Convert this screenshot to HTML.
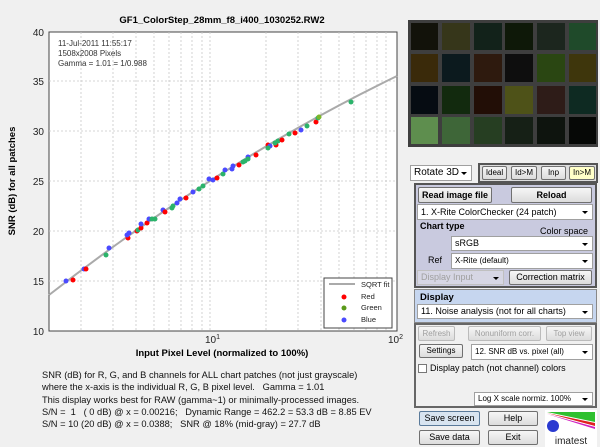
<!DOCTYPE html>
<html><head><style>
*{margin:0;padding:0;box-sizing:border-box}
body{width:600px;height:447px;background:#f0f0f0;font-family:"Liberation Sans",sans-serif;position:relative;overflow:hidden;font-size:9px;color:#000}
.a{position:absolute}
.btn{position:absolute;background:linear-gradient(#f6f6f6,#dcdcdc);border:1px solid #707070;border-radius:2px;text-align:center;font-size:9px;line-height:13px}
.dd{position:absolute;background:#fff;border:1px solid #a0a0a0;font-size:9px;padding-left:3px;white-space:nowrap;overflow:hidden}
.dd:after{content:"";position:absolute;right:4px;top:50%;margin-top:-1px;border-left:3px solid transparent;border-right:3px solid transparent;border-top:3px solid #000}
.dis{color:#a0a0a0}
.txt{position:absolute;left:42px;top:369px;font-size:9.3px;line-height:12.3px;white-space:pre;color:#111}
</style></head><body>
<svg class="a" style="left:0;top:0" width="410" height="360" font-family="Liberation Sans, sans-serif">
<rect x="49" y="32" width="348" height="299" fill="#fff" stroke="#444" stroke-width="1"/>
<g stroke="#c8c8c8" stroke-dasharray="2,2" stroke-width="0.8">
<line x1="81" y1="32" x2="81" y2="331"/><line x1="113" y1="32" x2="113" y2="331"/><line x1="136" y1="32" x2="136" y2="331"/><line x1="154" y1="32" x2="154" y2="331"/><line x1="169" y1="32" x2="169" y2="331"/><line x1="181" y1="32" x2="181" y2="331"/><line x1="192" y1="32" x2="192" y2="331"/><line x1="202" y1="32" x2="202" y2="331"/><line x1="210" y1="32" x2="210" y2="331"/><line x1="266" y1="32" x2="266" y2="331"/><line x1="298" y1="32" x2="298" y2="331"/><line x1="321" y1="32" x2="321" y2="331"/><line x1="339" y1="32" x2="339" y2="331"/><line x1="354" y1="32" x2="354" y2="331"/><line x1="366" y1="32" x2="366" y2="331"/><line x1="377" y1="32" x2="377" y2="331"/><line x1="386" y1="32" x2="386" y2="331"/>
<line x1="49" y1="81" x2="397" y2="81"/><line x1="49" y1="131" x2="397" y2="131"/><line x1="49" y1="181" x2="397" y2="181"/><line x1="49" y1="231" x2="397" y2="231"/><line x1="49" y1="281" x2="397" y2="281"/>
</g>
<g font-size="10" fill="#222" text-anchor="end">
<text x="44" y="36">40</text><text x="44" y="85">35</text><text x="44" y="135">30</text><text x="44" y="185">25</text><text x="44" y="235">20</text><text x="44" y="285">15</text><text x="44" y="335">10</text>
</g>
<text x="205" y="343" font-size="10" fill="#222">10<tspan font-size="7" dy="-4">1</tspan></text>
<text x="388" y="343" font-size="10" fill="#222">10<tspan font-size="7" dy="-4">2</tspan></text>
<text x="222" y="23" font-size="9.5" font-weight="bold" text-anchor="middle">GF1_ColorStep_28mm_f8_i400_1030252.RW2</text>
<text x="222" y="356" font-size="9.5" font-weight="bold" text-anchor="middle">Input Pixel Level (normalized to 100%)</text>
<text transform="translate(15,181) rotate(-90)" font-size="9.5" font-weight="bold" text-anchor="middle">SNR (dB) for all patches</text>
<g font-size="8" fill="#333"><text x="58" y="46">11-Jul-2011 11:55:17</text><text x="58" y="56">1508x2008 Pixels</text><text x="58" y="66">Gamma = 1.01 = 1/0.988</text></g>
<path d="M49,295 Q221,161 397,76" fill="none" stroke="#aaa" stroke-width="2"/>
<g>
<circle cx="66" cy="281" r="2.5" fill="#4a4aff"/><circle cx="73" cy="280" r="2.5" fill="#f00"/><circle cx="84" cy="269" r="2.5" fill="#4a4aff"/><circle cx="86" cy="269" r="2.5" fill="#f00"/><circle cx="106" cy="255" r="2.5" fill="#2bb36a"/><circle cx="109" cy="248" r="2.5" fill="#4a4aff"/><circle cx="128" cy="238" r="2.5" fill="#f00"/><circle cx="127" cy="235" r="2.5" fill="#4a4aff"/><circle cx="129" cy="233" r="2.5" fill="#4a4aff"/><circle cx="137" cy="231" r="2.5" fill="#f00"/><circle cx="138" cy="230" r="2.5" fill="#2bb36a"/><circle cx="141" cy="228" r="2.5" fill="#f00"/><circle cx="141" cy="224" r="2.5" fill="#4a4aff"/><circle cx="147" cy="223" r="2.5" fill="#f00"/><circle cx="149" cy="219" r="2.5" fill="#4a4aff"/><circle cx="152" cy="219" r="2.5" fill="#2bb36a"/><circle cx="155" cy="219" r="2.5" fill="#2bb36a"/><circle cx="163" cy="210" r="2.5" fill="#4a4aff"/><circle cx="165" cy="212" r="2.5" fill="#f00"/><circle cx="172" cy="208" r="2.5" fill="#2bb36a"/><circle cx="173" cy="206" r="2.5" fill="#2bb36a"/><circle cx="177" cy="203" r="2.5" fill="#4a4aff"/><circle cx="180" cy="199" r="2.5" fill="#4a4aff"/><circle cx="186" cy="198" r="2.5" fill="#f00"/><circle cx="193" cy="192" r="2.5" fill="#4a4aff"/><circle cx="199" cy="189" r="2.5" fill="#2bb36a"/><circle cx="203" cy="186" r="2.5" fill="#2bb36a"/><circle cx="209" cy="179" r="2.5" fill="#4a4aff"/><circle cx="213" cy="180" r="2.5" fill="#4a4aff"/><circle cx="217" cy="178" r="2.5" fill="#f00"/><circle cx="223" cy="174" r="2.5" fill="#2bb36a"/><circle cx="225" cy="170" r="2.5" fill="#4a4aff"/><circle cx="232" cy="169" r="2.5" fill="#4a4aff"/><circle cx="233" cy="166" r="2.5" fill="#4a4aff"/><circle cx="239" cy="165" r="2.5" fill="#f00"/><circle cx="243" cy="162" r="2.5" fill="#2bb36a"/><circle cx="245" cy="161" r="2.5" fill="#2bb36a"/><circle cx="248" cy="157" r="2.5" fill="#4a4aff"/><circle cx="248" cy="159" r="2.5" fill="#2bb36a"/><circle cx="256" cy="155" r="2.5" fill="#f00"/><circle cx="268" cy="145" r="2.5" fill="#f00"/><circle cx="270" cy="146" r="2.5" fill="#4a4aff"/><circle cx="268" cy="148" r="2.5" fill="#2bb36a"/><circle cx="276" cy="145" r="2.5" fill="#f00"/><circle cx="275" cy="143" r="2.5" fill="#2bb36a"/><circle cx="278" cy="141" r="2.5" fill="#2bb36a"/><circle cx="282" cy="140" r="2.5" fill="#f00"/><circle cx="289" cy="134" r="2.5" fill="#2bb36a"/><circle cx="295" cy="133" r="2.5" fill="#f00"/><circle cx="301" cy="130" r="2.5" fill="#4a4aff"/><circle cx="307" cy="126" r="2.5" fill="#2bb36a"/><circle cx="316" cy="122" r="2.5" fill="#f00"/><circle cx="318" cy="118" r="2.5" fill="#2bb36a"/><circle cx="319" cy="117" r="2.5" fill="#7cb82a"/><circle cx="351" cy="102" r="2.5" fill="#2bb36a"/>
</g>
<rect x="324" y="278" width="68" height="50" fill="#fff" stroke="#444"/>
<line x1="329" y1="284" x2="355" y2="284" stroke="#aaa" stroke-width="2"/>
<g font-size="7.5" fill="#222"><text x="361" y="287">SQRT fit</text><text x="361" y="299">Red</text><text x="361" y="310">Green</text><text x="361" y="322">Blue</text></g>
<circle cx="344" cy="297" r="2.5" fill="#f00"/><circle cx="344" cy="308" r="2.5" fill="#5a9a1a"/><circle cx="344" cy="320" r="2.5" fill="#4a4aff"/>
</svg>
<div class="txt">SNR (dB) for R, G, and B channels for ALL chart patches (not just grayscale)
where the x-axis is the individual R, G, B pixel level.   Gamma = 1.01
This display works best for RAW (gamma~1) or minimally-processed images.
S/N =  1   ( 0 dB) @ x = 0.00216;   Dynamic Range = 462.2 = 53.3 dB = 8.85 EV
S/N = 10 (20 dB) @ x = 0.0388;   SNR @ 18% (mid-gray) = 27.7 dB</div>

<svg class="a" style="left:408px;top:20px" width="190" height="127">
<rect width="190" height="127" fill="#3e3e3e"/>
<g>
<rect x="3" y="3" width="27" height="27" fill="#12120a"/><rect x="34" y="3" width="28" height="27" fill="#36361a"/><rect x="66" y="3" width="28" height="27" fill="#12221a"/><rect x="97" y="3" width="28" height="27" fill="#0e1808"/><rect x="129" y="3" width="28" height="27" fill="#1c261e"/><rect x="161" y="3" width="27" height="27" fill="#1f4a2a"/>
<rect x="3" y="34" width="27" height="28" fill="#3a2a0a"/><rect x="34" y="34" width="28" height="28" fill="#0c1a1e"/><rect x="66" y="34" width="28" height="28" fill="#2e1a0e"/><rect x="97" y="34" width="28" height="28" fill="#0e0e0e"/><rect x="129" y="34" width="28" height="28" fill="#2a4612"/><rect x="161" y="34" width="27" height="28" fill="#3e360c"/>
<rect x="3" y="66" width="27" height="28" fill="#060c12"/><rect x="34" y="66" width="28" height="28" fill="#122a0e"/><rect x="66" y="66" width="28" height="28" fill="#220e06"/><rect x="97" y="66" width="28" height="28" fill="#4e5218"/><rect x="129" y="66" width="28" height="28" fill="#2e1c18"/><rect x="161" y="66" width="27" height="28" fill="#0e2a22"/>
<rect x="3" y="97" width="27" height="27" fill="#5e8e4e"/><rect x="34" y="97" width="28" height="27" fill="#3e6638"/><rect x="66" y="97" width="28" height="27" fill="#263e22"/><rect x="97" y="97" width="28" height="27" fill="#162016"/><rect x="129" y="97" width="28" height="27" fill="#0e140e"/><rect x="161" y="97" width="27" height="27" fill="#060806"/>
</g></svg>

<div class="dd" style="left:410px;top:165px;width:62px;height:16px;line-height:14px;font-size:10px">Rotate 3D</div>
<div class="a" style="left:478px;top:163px;width:120px;height:20px;border:2px solid #555;background:#ddd"></div>
<div class="btn" style="left:482px;top:166px;width:25px;height:14px;font-size:8px;line-height:12px">Ideal</div>
<div class="btn" style="left:511px;top:166px;width:26px;height:14px;font-size:8px;line-height:12px">Id&gt;M</div>
<div class="btn" style="left:541px;top:166px;width:25px;height:14px;font-size:8px;line-height:12px">Inp</div>
<div class="btn" style="left:569px;top:166px;width:26px;height:14px;font-size:8px;line-height:12px;background:#ffffc8">In&gt;M</div>

<div class="a" style="left:414px;top:183px;width:183px;height:105px;background:#c9cadf;border:2px solid #555"></div>
<div class="btn" style="left:418px;top:187px;width:74px;height:16px;font-weight:bold;line-height:14px">Read image file</div>
<div class="btn" style="left:511px;top:187px;width:81px;height:16px;font-weight:bold;line-height:14px">Reload</div>
<div class="dd" style="left:417px;top:204px;width:176px;height:16px;line-height:14px">1. X-Rite ColorChecker (24 patch)</div>
<div class="a" style="left:420px;top:221px;font-weight:bold;font-size:9px">Chart type</div>
<div class="a" style="left:540px;top:226px;font-size:9px">Color space</div>
<div class="dd" style="left:451px;top:236px;width:142px;height:15px;line-height:13px">sRGB</div>
<div class="a" style="left:428px;top:255px;font-size:9px">Ref</div>
<div class="dd" style="left:451px;top:253px;width:142px;height:16px;line-height:14px;font-size:8px">X-Rite (default)</div>
<div class="dd dis" style="left:417px;top:270px;width:87px;height:15px;line-height:13px;background:#d6d6e4;border-color:#c0c0c0">Display Input</div>
<div class="btn" style="left:509px;top:270px;width:83px;height:15px">Correction matrix</div>

<div class="a" style="left:414px;top:289px;width:183px;height:34px;background:#c6d6ef;border:1px solid #888"></div>
<div class="a" style="left:420px;top:292px;font-weight:bold;font-size:9.5px">Display</div>
<div class="dd" style="left:417px;top:304px;width:176px;height:15px;line-height:13px">11. Noise analysis (not for all charts)</div>

<div class="a" style="left:414px;top:323px;width:183px;height:85px;border:2px solid #666;background:#f0f0f0"></div>
<div class="btn dis" style="left:418px;top:326px;width:37px;height:15px;font-size:8px;border-color:#bbb">Refresh</div>
<div class="btn dis" style="left:468px;top:326px;width:73px;height:15px;font-size:8px;border-color:#bbb">Nonuniform corr.</div>
<div class="btn dis" style="left:546px;top:326px;width:46px;height:15px;font-size:8px;border-color:#bbb">Top view</div>
<div class="btn" style="left:419px;top:344px;width:44px;height:14px;font-size:8px;line-height:12px">Settings</div>
<div class="dd" style="left:471px;top:344px;width:122px;height:16px;line-height:14px;font-size:8px">12. SNR dB vs. pixel (all)</div>
<div class="a" style="left:418px;top:364px;width:9px;height:9px;border:1px solid #777;background:#fff"></div>
<div class="a" style="left:430px;top:363px;font-size:9px">Display patch (not channel) colors</div>
<div class="dd" style="left:474px;top:392px;width:119px;height:14px;line-height:12px;font-size:8px">Log X scale normiz. 100%</div>

<div class="btn" style="left:419px;top:411px;width:61px;height:15px;background:#d8e4f0;border-color:#5a7a9a">Save screen</div>
<div class="btn" style="left:488px;top:411px;width:50px;height:15px">Help</div>
<div class="btn" style="left:419px;top:430px;width:61px;height:15px">Save data</div>
<div class="btn" style="left:488px;top:430px;width:50px;height:15px">Exit</div>
<svg class="a" style="left:545px;top:410px" width="52" height="37">
<rect width="52" height="37" fill="#fff"/>
<polygon points="2,2 50,2 50,12" fill="#2fc02f"/>
<polygon points="2,3 50,13 50,16" fill="#e02020"/>
<polygon points="2,4 50,17 50,19" fill="#d020c0"/>
<circle cx="8" cy="16" r="6" fill="#2a3ad0"/>
<text x="26" y="34" font-size="10" font-family="Liberation Sans, sans-serif" text-anchor="middle" fill="#222">imatest</text>
</svg>
</body></html>
